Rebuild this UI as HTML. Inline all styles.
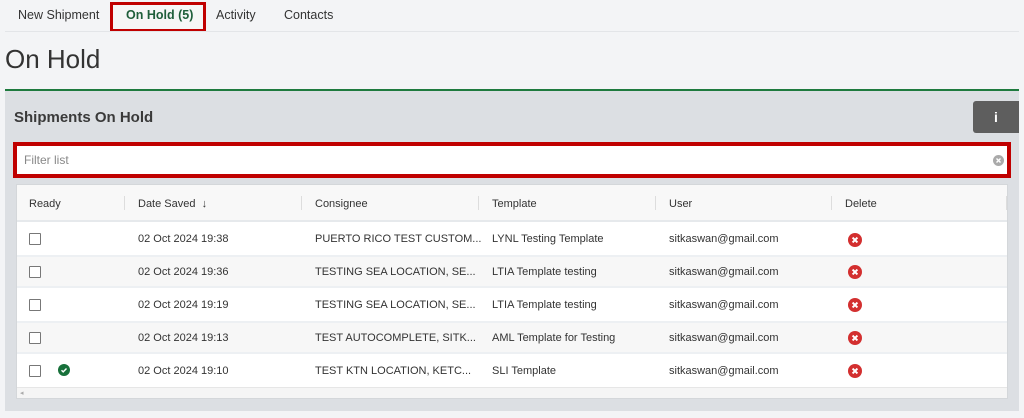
<!DOCTYPE html><html><head><style>
*{box-sizing:border-box;margin:0;padding:0}
body{width:1024px;height:418px;background:#f3f4f6;font-family:"Liberation Sans",sans-serif;color:#333;position:relative;overflow:hidden}
.a{position:absolute}
.tab{position:absolute;top:8px;font-size:12.5px;color:#333}
.t{position:absolute;font-size:11px;color:#333;white-space:nowrap}
.cb{position:absolute;left:29px;width:12px;height:12px;border:1px solid #777;border-radius:1px;background:#fff}
.x{position:absolute;left:848px;width:14px;height:14px}
.sep{position:absolute;top:196px;width:1px;height:14px;background:#ddd}
</style></head><body>
<div class="tab" style="left:18px">New Shipment</div>
<div class="a" style="left:110px;top:2px;width:96px;height:30px;border:3px solid #c00000;background:#f6f6f6"></div>
<div class="tab" style="left:126px;color:#1f5e3a;font-weight:bold">On Hold (5)</div>
<div class="tab" style="left:216px">Activity</div>
<div class="tab" style="left:284px">Contacts</div>
<div class="a" style="left:5px;top:31px;width:1014px;height:1px;background:#e3e5e8"></div>
<div class="a" style="left:5px;top:44px;font-size:26px;color:#333">On Hold</div>
<div class="a" style="left:5px;top:89px;width:1014px;height:322px;background:#dcdfe3;border-top:2px solid #1e7a3e"></div>
<div class="a" style="left:14px;top:109px;font-size:15px;font-weight:bold;color:#3a3a3a">Shipments On Hold</div>
<div class="a" style="left:973px;top:101px;width:46px;height:32px;background:#5e5e5e;border-radius:3px 0 0 3px;color:#fff;font-weight:bold;font-size:14px;text-align:center;line-height:32px">i</div>
<div class="a" style="left:13px;top:142px;width:998px;height:36px;border:4px solid #c00000;background:#fff"></div>
<div class="a" style="left:24px;top:153px;font-size:12px;color:#888">Filter list</div>
<svg class="a" style="left:993px;top:155px" width="11" height="11" viewBox="0 0 11 11"><circle cx="5.5" cy="5.5" r="5.5" fill="#aaa"/><path d="M3.5 3.5l4 4M7.5 3.5l-4 4" stroke="#fff" stroke-width="1.4"/></svg>
<div class="a" style="left:16px;top:184px;width:992px;height:215px;background:#fff;border:1px solid #d4d7da"></div>
<div class="a" style="left:17px;top:185px;width:990px;height:37px;background:#f8f8f8;border-bottom:2px solid #e6e9ec"></div>
<div class="t" style="left:29px;top:198px">Ready</div>
<div class="t" style="left:138px;top:198px">Date Saved &nbsp;↓</div>
<div class="t" style="left:315px;top:198px">Consignee</div>
<div class="t" style="left:492px;top:198px">Template</div>
<div class="t" style="left:669px;top:198px">User</div>
<div class="t" style="left:845px;top:198px">Delete</div>
<div class="sep" style="left:124px"></div><div class="sep" style="left:301px"></div><div class="sep" style="left:478px"></div><div class="sep" style="left:655px"></div><div class="sep" style="left:831px"></div><div class="sep" style="left:1006px"></div>
<div class="a" style="left:17px;top:255px;width:990px;height:33px;background:#f7f7f7;border-top:2px solid #edf0f3;border-bottom:2px solid #edf0f3"></div>
<div class="a" style="left:17px;top:321px;width:990px;height:33px;background:#f7f7f7;border-top:2px solid #edf0f3;border-bottom:2px solid #edf0f3"></div>
<div class="a" style="left:17px;top:387px;width:990px;height:11px;background:#f5f5f5;border-top:1px solid #e6e6e6"></div>
<div class="a" style="left:20px;top:389px;font-size:7px;color:#aaa">◂</div>
<svg width="0" height="0" style="position:absolute"><defs><g id="x"><circle cx="7" cy="7" r="7" fill="#d32f2f"/><path d="M4.6 4.6l4.8 4.8M9.4 4.6l-4.8 4.8" stroke="#fff" stroke-width="2"/></g></defs></svg>

<div class="cb" style="top:233px"></div><div class="t" style="left:138px;top:233px">02 Oct 2024 19:38</div><div class="t" style="left:315px;top:233px">PUERTO RICO TEST CUSTOM...</div><div class="t" style="left:492px;top:233px">LYNL Testing Template</div><div class="t" style="left:669px;top:233px">sitkaswan@gmail.com</div><svg class="x" style="top:233px" viewBox="0 0 14 14"><use href="#x"/></svg>
<div class="cb" style="top:266px"></div><div class="t" style="left:138px;top:266px">02 Oct 2024 19:36</div><div class="t" style="left:315px;top:266px">TESTING SEA LOCATION, SE...</div><div class="t" style="left:492px;top:266px">LTIA Template testing</div><div class="t" style="left:669px;top:266px">sitkaswan@gmail.com</div><svg class="x" style="top:265px" viewBox="0 0 14 14"><use href="#x"/></svg>
<div class="cb" style="top:299px"></div><div class="t" style="left:138px;top:299px">02 Oct 2024 19:19</div><div class="t" style="left:315px;top:299px">TESTING SEA LOCATION, SE...</div><div class="t" style="left:492px;top:299px">LTIA Template testing</div><div class="t" style="left:669px;top:299px">sitkaswan@gmail.com</div><svg class="x" style="top:298px" viewBox="0 0 14 14"><use href="#x"/></svg>
<div class="cb" style="top:332px"></div><div class="t" style="left:138px;top:332px">02 Oct 2024 19:13</div><div class="t" style="left:315px;top:332px">TEST AUTOCOMPLETE, SITK...</div><div class="t" style="left:492px;top:332px">AML Template for Testing</div><div class="t" style="left:669px;top:332px">sitkaswan@gmail.com</div><svg class="x" style="top:331px" viewBox="0 0 14 14"><use href="#x"/></svg>
<div class="cb" style="top:365px"></div><svg class="a" style="left:58px;top:364px" width="12" height="12" viewBox="0 0 12 12"><circle cx="6" cy="6" r="6" fill="#17703a"/><path d="M3.5 6.2l1.7 1.7 3.3-3.4" stroke="#fff" stroke-width="1.4" fill="none"/></svg><div class="t" style="left:138px;top:365px">02 Oct 2024 19:10</div><div class="t" style="left:315px;top:365px">TEST KTN LOCATION, KETC...</div><div class="t" style="left:492px;top:365px">SLI Template</div><div class="t" style="left:669px;top:365px">sitkaswan@gmail.com</div><svg class="x" style="top:364px" viewBox="0 0 14 14"><use href="#x"/></svg>
</body></html>
